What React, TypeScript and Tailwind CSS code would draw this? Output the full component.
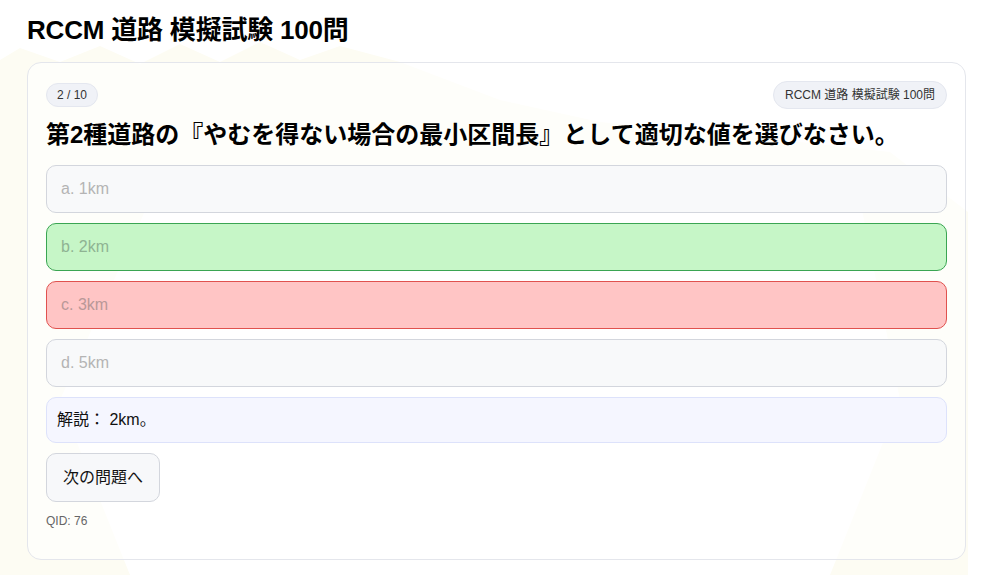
const options = [
    { key: 'a', label: '1km', state: 'idle' },
    { key: 'b', label: '2km', state: 'correct' },
    { key: 'c', label: '3km', state: 'wrong' },
    { key: 'd', label: '5km', state: 'idle' },
];

function Backdrop() {
    // faint snow-capped mountain pattern behind the page
    return (
        <svg className="pointer-events-none absolute inset-0 h-full w-full" viewBox="0 0 1006 575" preserveAspectRatio="none" aria-hidden>
            <polygon
                fill="#fdfcf3"
                points="20,48 60,62 100,46 140,64 180,44 220,62 260,42 300,60 340,46 400,62 500,100 600,122 700,132 800,142 890,152 968,212 968,575 830,575 900,400 860,200 150,200 60,400 130,575 0,575 0,60"
            />
            <polygon fill="#fdfcf3" points="30,575 55,558 80,575 105,558 130,575" />
            <polygon fill="#fdfcf3" points="930,575 945,560 960,575" />
        </svg>
    );
}

export default function App() {
    return (
        <main
            className="relative min-h-[575px] bg-white px-[27px] pt-[14px] text-[#111]"
            style={{ fontFamily: '"Liberation Sans", Arial, "Noto Sans CJK JP", sans-serif' }}
        >
            <Backdrop />
            <div className="relative w-[939px]">
                <h1 className="mb-[16px] h-[32px] text-[26px] font-bold leading-[32px] tracking-[-0.2px] text-black">
                    RCCM 道路 模擬試験 100問
                </h1>

                <div className="rounded-[14px] border border-[#e4e6ec] bg-white/60 px-[18px] pb-[29px] pt-[18px]">
                    {/* header badges */}
                    <div className="flex items-center justify-between">
                        <span className="flex h-[24px] items-center rounded-full border border-[#e4e7ef] bg-[#f0f2f7] px-[10px] text-[12px] text-[#333]">
                            2 / 10
                        </span>
                        <span className="flex h-[28px] items-center rounded-full border border-[#e4e7ef] bg-[#f0f2f7] px-[11px] text-[12px] text-[#333]">
                            RCCM 道路 模擬試験 100問
                        </span>
                    </div>

                    <h2 className="mb-[14px] mt-[10px] text-[24px] font-bold leading-[32px] text-black">
                        第2種道路の『やむを得ない場合の最小区間長』として適切な値を選びなさい。
                    </h2>

                    <div className="flex flex-col gap-[10px]">
                        {options.map((opt) => (
                            <div
                                key={opt.key}
                                className={`flex h-[48px] items-center rounded-[10px] border px-[14px] text-[16px] ${opt.state === 'correct'
                                    ? 'border-[#3aa552] bg-[#c6f6c7] text-[#8fb393]'
                                    : opt.state === 'wrong'
                                        ? 'border-[#e0524f] bg-[#ffc5c5] text-[#b99898]'
                                        : 'border-[#d3d6dd] bg-[#f8f9fa] text-[#b4b4b4]'
                                    }`}
                            >
                                {opt.key}. {opt.label}
                            </div>
                        ))}

                        <div className="flex h-[46px] items-center rounded-[10px] border border-[#dde2fb] bg-[#f5f6ff] px-[10px] text-[16px] text-[#111]">
                            解説： 2km。
                        </div>

                        <div>
                            <button className="h-[49px] rounded-[10px] border border-[#d3d6dd] bg-[#f7f8fa] px-[16px] text-[16px] text-[#111]">
                                次の問題へ
                            </button>
                        </div>
                    </div>

                    <div className="mt-[10px] text-[12px] text-[#666]">QID: 76</div>
                </div>
            </div>
        </main>
    );
}
